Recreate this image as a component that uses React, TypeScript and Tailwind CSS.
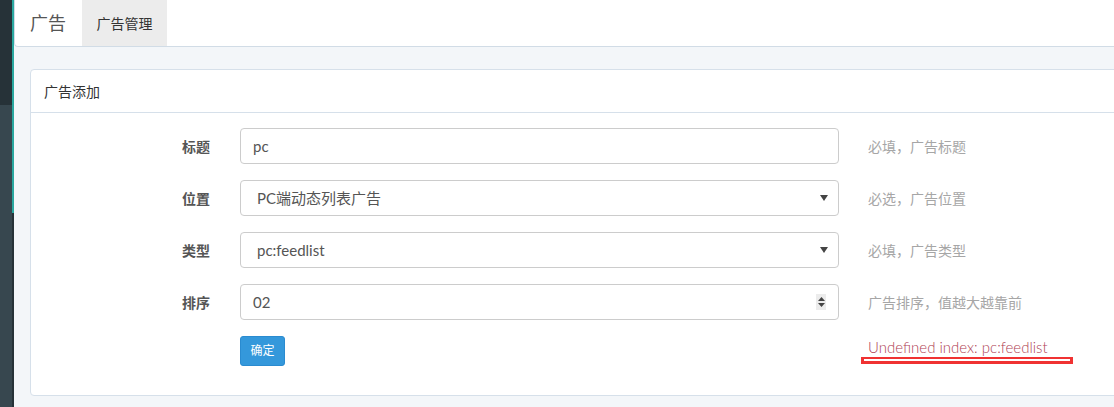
import React from "react";

const rows = [
  { label: "标题", kind: "text", value: "pc", help: "必填，广告标题" },
  { label: "位置", kind: "select", value: "PC端动态列表广告", help: "必选，广告位置" },
  { label: "类型", kind: "select", value: "pc:feedlist", help: "必填，广告类型" },
  { label: "排序", kind: "number", value: "02", help: "广告排序，值越大越靠前" },
];

function Field({ kind, value }: { kind: string; value: string }) {
  return (
    <div
      className="flex h-[36px] w-[599px] shrink-0 items-center rounded-[4px] border border-[#cccccc] bg-white pl-[12px] pr-[8px] text-[15px] text-[#555]"
      style={{ fontFamily: 'Lato, "Noto Sans CJK SC", sans-serif' }}
    >
      <span className={kind === "select" ? "flex-1 pl-[4px]" : "flex-1"}>{value}</span>
      {kind === "select" && (
        <svg width="8" height="6" viewBox="0 0 8 6" className="mr-[2px]">
          <path d="M0 0h8L4 6z" fill="#444" />
        </svg>
      )}
      {kind === "number" && (
        <span className="mr-[4px] flex h-[16px] w-[10px] flex-col items-center justify-center gap-[2px] bg-[#ececec]">
          <svg width="7" height="4" viewBox="0 0 7 4">
            <path d="M0 4h7L3.5 0z" fill="#444" />
          </svg>
          <svg width="7" height="4" viewBox="0 0 7 4">
            <path d="M0 0h7L3.5 4z" fill="#444" />
          </svg>
        </span>
      )}
    </div>
  );
}

export default function App() {
  return (
    <div
      className="flex h-[407px] w-[1114px] overflow-hidden bg-[#f3f6f9]"
      style={{ fontFamily: '"Open Sans", "Noto Sans CJK SC", sans-serif' }}
    >
      {/* 左侧栏 */}
      <div className="flex w-[12px] shrink-0 flex-col">
        <div className="h-[105px] bg-[#263238]" />
        <div className="flex-1 bg-[#37474f]" />
      </div>
      <div className="flex w-[2px] shrink-0 flex-col">
        <div className="h-[213px] bg-[#2aa8a0]" />
        <div className="flex-1 bg-[#263238]" />
      </div>

      <div className="flex min-w-0 flex-1 flex-col">
        {/* 顶部标签 */}
        <div className="flex h-[47px] shrink-0 items-stretch rounded-bl-[4px] border-b border-l border-[#d1dce6] bg-white">
          <div className="flex items-center pl-[15px] pr-[16px] text-[18px] text-[#555]">广告</div>
          <div className="flex w-[85px] items-center justify-center bg-[#ececec] text-[14px] text-[#333]">广告管理</div>
        </div>

        <div className="pl-[16px] pt-[22px]">
          <div className="w-[1110px] rounded-[4px] border border-[#d6e0ea] bg-white">
            <div className="flex h-[43px] items-center border-b border-[#d6e0ea] px-[13px] text-[14px] text-[#333]">
              广告添加
            </div>
            <div className="flex flex-col gap-[16px] pb-[29px] pt-[15px]">
              {rows.map((r) => (
                <div key={r.label} className="flex items-center">
                  <div className="w-[179px] shrink-0 text-right text-[14px] font-bold text-[#555]">{r.label}</div>
                  <div className="w-[30px] shrink-0" />
                  <Field kind={r.kind} value={r.value} />
                  <div className="pl-[29px] text-[14px] text-[#a6a6a6]">{r.help}</div>
                </div>
              ))}
              <div className="flex items-start">
                <div className="w-[209px] shrink-0" />
                <div className="w-[599px] shrink-0">
                  <button className="h-[30px] w-[45px] rounded-[3px] border border-[#2a8bd0] bg-[#3498db] text-[12px] text-white">
                    确定
                  </button>
                </div>
                <div className="flex flex-col pl-[22px] pt-[1px]">
                  <div
                    className="pl-[7px] text-[15px] font-light leading-[20px] text-[#b03f55]"
                    style={{ fontFamily: 'Lato, sans-serif' }}
                  >
                    Undefined index: pc:feedlist
                  </div>
                  <div className="h-[7px] w-[212px] border-x-[3px] border-b-[3px] border-t-[2px] border-[#f03232] bg-white" />
                </div>
              </div>
            </div>
          </div>
        </div>
      </div>
    </div>
  );
}
